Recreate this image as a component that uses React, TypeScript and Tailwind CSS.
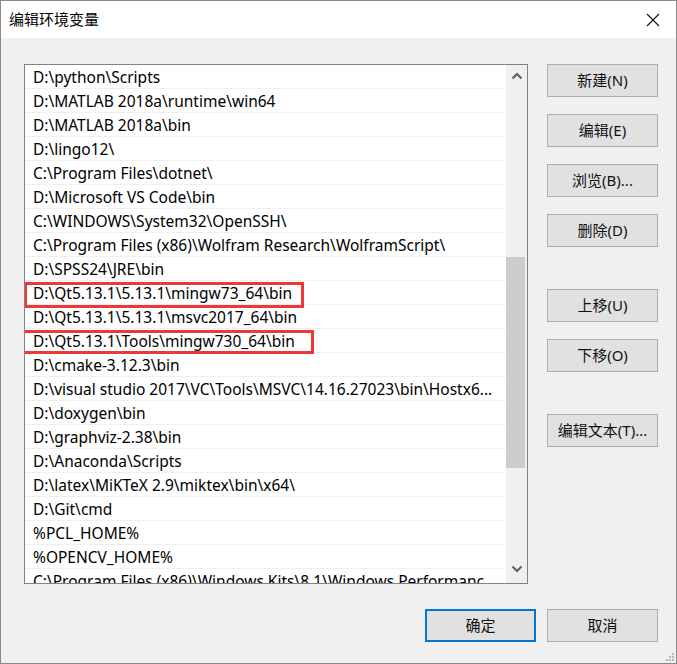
import { FC } from 'react';

const paths: string[] = [
  'D:\\python\\Scripts',
  'D:\\MATLAB 2018a\\runtime\\win64',
  'D:\\MATLAB 2018a\\bin',
  'D:\\lingo12\\',
  'C:\\Program Files\\dotnet\\',
  'D:\\Microsoft VS Code\\bin',
  'C:\\WINDOWS\\System32\\OpenSSH\\',
  'C:\\Program Files (x86)\\Wolfram Research\\WolframScript\\',
  'D:\\SPSS24\\JRE\\bin',
  'D:\\Qt5.13.1\\5.13.1\\mingw73_64\\bin',
  'D:\\Qt5.13.1\\5.13.1\\msvc2017_64\\bin',
  'D:\\Qt5.13.1\\Tools\\mingw730_64\\bin',
  'D:\\cmake-3.12.3\\bin',
  'D:\\visual studio 2017\\VC\\Tools\\MSVC\\14.16.27023\\bin\\Hostx6...',
  'D:\\doxygen\\bin',
  'D:\\graphviz-2.38\\bin',
  'D:\\Anaconda\\Scripts',
  'D:\\latex\\MiKTeX 2.9\\miktex\\bin\\x64\\',
  'D:\\Git\\cmd',
  '%PCL_HOME%',
  '%OPENCV_HOME%',
  'C:\\Program Files (x86)\\Windows Kits\\8.1\\Windows Performanc...',
];

const font = "font-['Noto_Sans','Noto_Sans_CJK_SC',sans-serif]";

const SideButton: FC<{ label: string; className?: string }> = ({ label, className = '' }) => (
  <button
    className={`flex h-[33px] w-[111px] items-center justify-center border border-[#adadad] bg-[#e1e1e1] text-[15px] leading-none text-[#111] ${className}`}
  >
    {label}
  </button>
);

const Chevron: FC<{ down?: boolean }> = ({ down }) => (
  <svg width="12" height="8" viewBox="0 0 12 8">
    <path
      d={down ? 'M1.5 1.5 L6 6 L10.5 1.5' : 'M1.5 6.5 L6 2 L10.5 6.5'}
      fill="none"
      stroke="#606060"
      strokeWidth="2"
    />
  </svg>
);

export default function App() {
  return (
    <div className={`flex h-[664px] w-[677px] flex-col border border-[#8a8a8a] bg-[#f0f0f0] ${font}`}>
      {/* title bar */}
      <div className="flex h-[37px] shrink-0 items-center justify-between bg-white pl-[8px] pr-[16px]">
        <span className="text-[15px] text-black">编辑环境变量</span>
        <svg width="14" height="14" viewBox="0 0 14 14">
          <path d="M1 1 L13 13 M13 1 L1 13" stroke="#111" strokeWidth="1.1" />
        </svg>
      </div>

      <div className="flex flex-1 flex-col pl-[23px] pr-[18px] pt-[26px]">
        <div className="flex">
          {/* list box */}
          <div className="flex h-[520px] w-[504px] border border-[#828282] bg-white">
            <div className="relative h-[518px] w-[481px] overflow-hidden">
              {paths.map((p) => (
                <div
                  key={p}
                  className="flex h-[24px] items-center whitespace-nowrap border-b border-[#f0f0f0] pl-[8px] pt-[2px] text-[15.5px] leading-none text-black"
                >
                  {p}
                </div>
              ))}
              <div className="absolute left-[-1px] top-[217px] h-[26px] w-[280px] border-[3px] border-[#ee3838]" />
              <div className="absolute left-[-4px] top-[265px] h-[24px] w-[293px] border-[3px] border-[#ee3838]" />
            </div>
            {/* scrollbar */}
            <div className="flex h-[518px] w-[21px] flex-col bg-[#f0f0f0]">
              <div className="flex h-[20px] items-center justify-center pl-[1px] pt-[2px]">
                <Chevron />
              </div>
              <div className="h-[172px]" />
              <div className="h-[211px] w-[19px] bg-[#cdcdcd]" />
              <div className="flex-1" />
              <div className="flex h-[24px] items-center justify-center pl-[1px] pb-[4px]">
                <Chevron down />
              </div>
            </div>
          </div>

          {/* side buttons */}
          <div className="ml-[19px] flex flex-col">
            <SideButton label="新建(N)" />
            <SideButton label="编辑(E)" className="mt-[17px]" />
            <SideButton label="浏览(B)..." className="mt-[17px]" />
            <SideButton label="删除(D)" className="mt-[17px]" />
            <SideButton label="上移(U)" className="mt-[42px]" />
            <SideButton label="下移(O)" className="mt-[17px]" />
            <SideButton label="编辑文本(T)..." className="mt-[42px]" />
          </div>
        </div>

        {/* bottom buttons */}
        <div className="mt-[25px] flex justify-end gap-[11px]">
          <button className="flex h-[33px] w-[111px] items-center justify-center border-2 border-[#0078d7] bg-[#e1e1e1] text-[15px] leading-none text-[#111]">
            确定
          </button>
          <button className="flex h-[33px] w-[111px] items-center justify-center border border-[#adadad] bg-[#e1e1e1] text-[15px] leading-none text-[#111]">
            取消
          </button>
        </div>

        <div className="mt-auto flex justify-end pb-[1px]">
          <svg width="12" height="12" viewBox="0 0 12 12" className="mr-[-17px]">
            {[
              [9, 1],
              [6, 4],
              [9, 4],
              [3, 7],
              [6, 7],
              [9, 7],
            ].map(([x, y]) => (
              <rect key={`${x}-${y}`} x={x} y={y + 2} width="2" height="2" fill="#b8b8b8" />
            ))}
          </svg>
        </div>
      </div>
    </div>
  );
}
